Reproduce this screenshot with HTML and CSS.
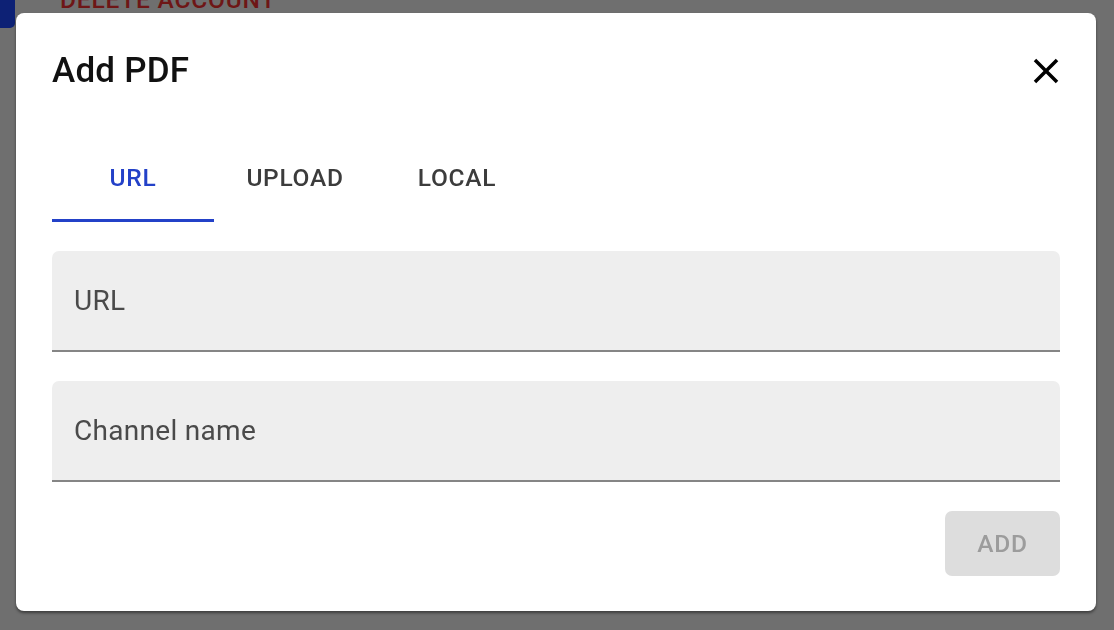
FILE: index.html
```html
<!DOCTYPE html>
<html>
<head>
<meta charset="utf-8">
<link rel="stylesheet" href="styles.css">
</head>
<body>
<div class="page">
  <div class="page-bar">
    <div class="nav-block"></div>
    <span class="danger-btn">DELETE ACCOUNT</span>
  </div>
</div>
<div class="dialog">
  <div class="dialog-title">
    <h2 class="title-text">Add PDF</h2>
    <button class="close-btn" aria-label="close">
      <svg viewBox="0 0 24 24" width="42" height="42"><path d="M19 6.41 17.59 5 12 10.59 6.41 5 5 6.41 10.59 12 5 17.59 6.41 19 12 13.41 17.59 19 19 17.59 13.41 12z" fill="#000"/></svg>
    </button>
  </div>
  <div class="dialog-body">
    <div class="tabs">
      <div class="tab active">URL</div>
      <div class="tab">UPLOAD</div>
      <div class="tab">LOCAL</div>
    </div>
    <div class="fields">
      <div class="field"><span class="field-label">URL</span></div>
      <div class="field"><span class="field-label">Channel name</span></div>
    </div>
    <div class="actions">
      <button class="add-btn">ADD</button>
    </div>
  </div>
</div>
</body>
</html>
```
FILE: styles.css
```css
* { box-sizing: border-box; }
html, body {
  margin: 0;
  padding: 0;
  width: 1114px;
  height: 630px;
  overflow: hidden;
  background: #6f6f6f;
  font-family: Roboto, "Liberation Sans", sans-serif;
}
.page {
  height: 630px;
}
.page-bar {
  display: flex;
  align-items: flex-start;
  margin-top: -12px;
}
.nav-block {
  width: 15px;
  height: 40px;
  background: #0d2175;
  border-bottom-right-radius: 5px;
}
.danger-btn {
  margin-left: 45px;
  font-size: 24.5px;
  font-weight: 500;
  letter-spacing: 0.8px;
  line-height: 24px;
  color: #6e1616;
}
.dialog {
  position: fixed;
  left: 16px;
  top: 13px;
  width: 1080px;
  height: 598px;
  background: #fff;
  border-radius: 8px;
  box-shadow: 0 2px 3px rgba(0,0,0,0.45);
  display: flex;
  flex-direction: column;
}
.dialog-title {
  display: flex;
  align-items: center;
  justify-content: space-between;
  padding: 34px 29px 0 36px;
  height: 82px;
}
.title-text {
  margin: 0;
  font-size: 35px;
  font-weight: 500;
  line-height: 48px;
  color: #111;
  letter-spacing: 0.2px;
}
.close-btn {
  border: 0;
  background: none;
  padding: 0;
  width: 42px;
  height: 42px;
  display: flex;
}
.dialog-body {
  padding: 43px 36px 36px 36px;
  display: flex;
  flex-direction: column;
}
.tabs {
  display: flex;
  height: 84px;
}
.tab {
  width: 162px;
  display: flex;
  align-items: center;
  justify-content: center;
  padding-bottom: 2px;
  border-bottom: 3.5px solid transparent;
  font-size: 24.5px;
  font-weight: 500;
  letter-spacing: 0.7px;
  color: #3c3c3c;
}
.tab.active {
  color: #2341c8;
  border-bottom-color: #2341c8;
}
.fields {
  display: flex;
  flex-direction: column;
  gap: 29px;
  margin-top: 29px;
}
.field {
  height: 101px;
  background: #eeeeee;
  border-radius: 7px 7px 0 0;
  border-bottom: 2px solid #858585;
  display: flex;
  align-items: center;
  padding-left: 22px;
  padding-bottom: 1px;
}
.field-label {
  font-size: 28px;
  color: #4a4a4a;
  letter-spacing: 0.3px;
}
.actions {
  display: flex;
  justify-content: flex-end;
  margin-top: 29px;
}
.add-btn {
  width: 115px;
  height: 65px;
  border: 0;
  border-radius: 7px;
  background: #dddddd;
  color: #9c9c9c;
  font-family: Roboto, "Liberation Sans", sans-serif;
  font-size: 24.5px;
  font-weight: 500;
  letter-spacing: 0.7px;
}
```
